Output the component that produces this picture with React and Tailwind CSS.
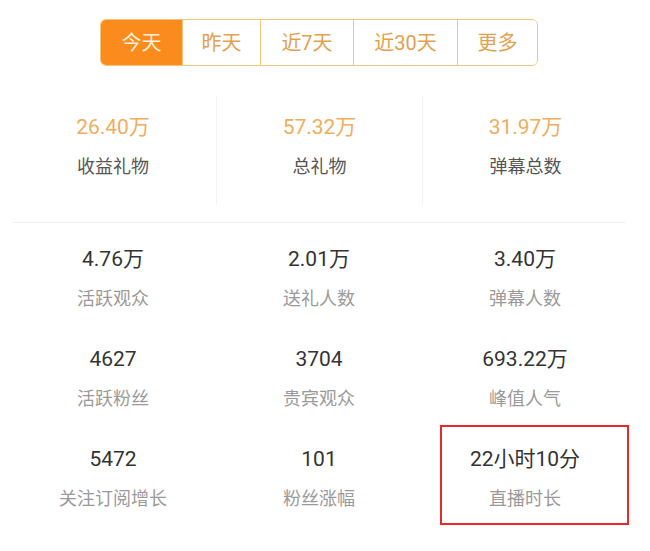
import React, { useState } from "react";

const tabs = [
  { name: "今天", w: "w-[81px]" },
  { name: "昨天", w: "w-[78px]" },
  { name: "近7天", w: "w-[93px]" },
  { name: "近30天", w: "w-[104px]" },
  { name: "更多", w: "w-[80px]" },
];

const topStats = [
  { value: "26.40万", label: "收益礼物" },
  { value: "57.32万", label: "总礼物" },
  { value: "31.97万", label: "弹幕总数" },
];

const stats = [
  { value: "4.76万", label: "活跃观众" },
  { value: "2.01万", label: "送礼人数" },
  { value: "3.40万", label: "弹幕人数" },
  { value: "4627", label: "活跃粉丝" },
  { value: "3704", label: "贵宾观众" },
  { value: "693.22万", label: "峰值人气" },
  { value: "5472", label: "关注订阅增长" },
  { value: "101", label: "粉丝涨幅" },
  { value: "22小时10分", label: "直播时长", marked: true },
];

const App = () => {
  const [active, setActive] = useState(0);

  return (
    <div
      className="w-[650px] h-[551px] bg-white overflow-hidden"
      style={{ fontFamily: 'Roboto, "Noto Sans CJK SC", sans-serif' }}
    >
      <div className="w-[618px] ml-[10px] pt-[19px]">
        <div className="flex justify-center">
          <div className="flex h-[47px] border border-[#f1c57c] rounded-[6px] overflow-hidden">
            {tabs.map((tab, index) => (
              <button
                key={index}
                onClick={() => setActive(index)}
                className={`${tab.w} ${index > 0 ? "border-l border-[#f1c57c]" : ""} ${
                  active === index ? "bg-[#fa8b1c] text-[#fff1dc]" : "bg-white text-[#e3a14f]"
                } flex items-center justify-center text-[20px]`}
              >
                {tab.name}
              </button>
            ))}
          </div>
        </div>

        <div className="grid grid-cols-3 mt-[29px]">
          {topStats.map((item, index) => (
            <div
              key={index}
              className={`h-[110px] pt-[18px] flex flex-col items-center ${
                index > 0 ? "border-l border-[#f3f3f3]" : ""
              }`}
            >
              <div className="h-[28px] leading-[28px] text-[21px] text-[#f0ad5c]">{item.value}</div>
              <div className="mt-[14px] h-[24px] leading-[24px] text-[18px] text-[#555]">{item.label}</div>
            </div>
          ))}
        </div>

        <div className="mt-[17px] mx-[2px] border-t border-[#f0f0f0]"></div>

        <div className="grid grid-cols-3 mt-[2px]">
          {stats.map((item, index) => (
            <div key={index} className="relative h-[100px] pt-[20px] flex flex-col items-center">
              <div className="h-[28px] leading-[28px] text-[21px] text-[#333]">{item.value}</div>
              <div className="mt-[14px] h-[24px] leading-[24px] text-[18px] text-[#9a9a9a]">{item.label}</div>
              {item.marked && (
                <div className="absolute left-[18px] -right-[1px] top-0 bottom-0 border-2 border-[#e8282b]"></div>
              )}
            </div>
          ))}
        </div>
      </div>
    </div>
  );
};

export default App;
